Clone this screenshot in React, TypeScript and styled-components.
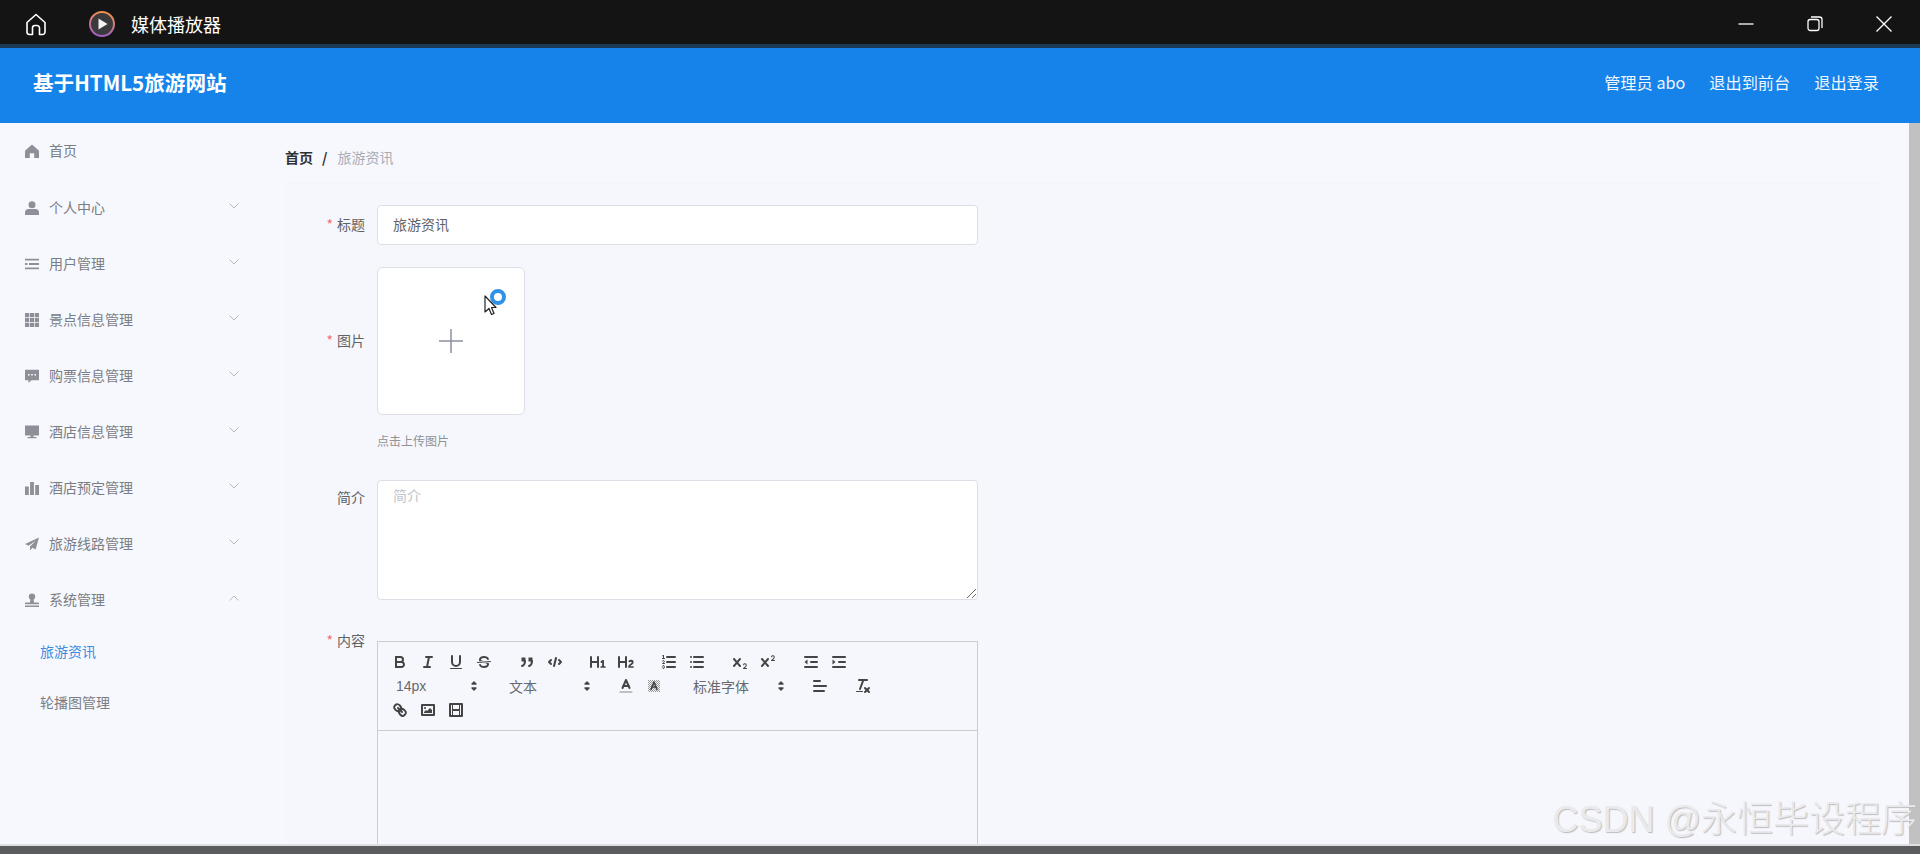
import React from "react";
import styled, { createGlobalStyle } from "styled-components";

const Global = createGlobalStyle`
  html, body { margin: 0; padding: 0; height: 100%; overflow: hidden; }
  body { font-family: "Noto Sans CJK SC", "Liberation Sans", sans-serif; background: #f6f8fd; }
  * { box-sizing: border-box; }
`;

const Page = styled.div`
  position: relative;
  height: 854px;
  display: flex;
  flex-direction: column;
  overflow: hidden;
`;

const TitleBar = styled.div`
  height: 48px;
  flex: none;
  background: #141414;
  border-bottom: 4px solid #1c3a56;
  padding-top: 3px;
  display: flex;
  align-items: center;
  color: #fff;
`;

const HomeButton = styled.div`
  width: 24px;
  height: 24px;
  margin-left: 24px;
  display: flex;
`;

const PlayerLogo = styled.div`
  width: 28px;
  height: 28px;
  margin-left: 40px;
  display: flex;
`;

const PlayerName = styled.div`
  margin-left: 15px;
  font-size: 18px;
  line-height: 24px;
`;

const WindowControls = styled.div`
  margin-left: auto;
  margin-right: 27px;
  display: flex;
  gap: 51px;
`;

const WindowIcon = styled.svg`
  width: 18px;
  height: 18px;
  display: block;
  fill: none;
  stroke: #fff;
  stroke-width: 1.3;
`;

const Header = styled.header`
  height: 75px;
  flex: none;
  background: #1583ea;
  display: flex;
  align-items: center;
  padding: 0 41px 7px 33px;
  color: #fff;
`;

const Brand = styled.div`
  font-size: 20.6px;
  font-weight: 700;
  line-height: 28px;
`;

const HeaderLinks = styled.nav`
  margin-left: auto;
  display: flex;
  gap: 24px;
  font-size: 16.2px;
  line-height: 24px;
  color: #eef6fe;
`;

const Body = styled.div`
  flex: 1;
  min-height: 0;
  display: flex;
  overflow: hidden;
`;

const Sidebar = styled.aside`
  width: 258px;
  flex: none;
  background: #f7f8fd;
`;

const MenuItem = styled.div`
  height: 56px;
  display: flex;
  align-items: center;
  padding: 0 18px 0 25px;
  font-size: 14px;
  color: #7a7d84;
  &:first-child {
    padding-bottom: 2px;
  }
`;

const MenuIcon = styled.svg`
  width: 14px;
  height: 14px;
  flex: none;
  margin: 1px 10px 0 0;
  fill: #8d9098;
  display: block;
`;

const Chevron = styled.svg<{ $up?: boolean }>`
  width: 12px;
  height: 12px;
  margin-left: auto;
  margin-top: -3px;
  fill: none;
  stroke: #b6b8bd;
  stroke-width: 1;
  transform: ${(p) => (p.$up ? "rotate(180deg)" : "none")};
`;

const SubMenu = styled.div`
  margin-top: -2px;
`;

const SubItem = styled.div<{ $active?: boolean }>`
  height: 51px;
  display: flex;
  align-items: center;
  padding-left: 40px;
  font-size: 14px;
  color: ${(p) => (p.$active ? "#3b8ce0" : "#7a7d84")};
`;

const Main = styled.main`
  flex: 1;
  min-width: 0;
  padding: 0 28px 0 27px;
  background: #f7f8fd;
`;

const Crumbs = styled.div`
  height: 60px;
  padding-top: 23px;
  display: flex;
  font-size: 14px;
  line-height: 22px;
  color: #a8abb6;
  border-bottom: 1px solid #f3f4f9;
`;

const CrumbHome = styled.span`
  font-weight: 700;
  color: #303133;
`;

const CrumbSep = styled.span`
  margin: 0 10px 0 9px;
  font-weight: 700;
  color: #303133;
`;

const FormPanel = styled.div`
  background: #f6f7fc;
  padding-top: 22px;
`;

const Field = styled.div<{ $mb?: number }>`
  display: flex;
  margin-bottom: ${(p) => p.$mb ?? 22}px;
`;

const Label = styled.label<{ $top?: number }>`
  width: 80px;
  flex: none;
  margin-right: 12px;
  text-align: right;
  font-size: 14px;
  line-height: 38px;
  color: #606266;
  margin-top: ${(p) => p.$top ?? 0}px;
`;

const Star = styled.span`
  color: #f56c6c;
  margin-right: 4px;
`;

const Control = styled.div`
  width: 601px;
`;

const TextInput = styled.div`
  height: 40px;
  background: #fff;
  border: 1px solid #dcdfe6;
  border-radius: 4px;
  padding: 0 15px;
  font-size: 14px;
  line-height: 37px;
  color: #606266;
`;

const UploadBox = styled.div`
  position: relative;
  width: 148px;
  height: 148px;
  background: #fff;
  border: 1px solid #dcdfe6;
  border-radius: 6px;
  display: flex;
  align-items: center;
  justify-content: center;
`;

const CursorRing = styled.div`
  position: absolute;
  left: 112px;
  top: 21px;
  width: 16px;
  height: 16px;
  border: 4px solid #2f92e8;
  border-radius: 50%;
  background: #fff;
`;

const CursorArrow = styled.svg`
  position: absolute;
  left: 106px;
  top: 27px;
  width: 14px;
  height: 22px;
`;

const Hint = styled.div`
  margin-top: 14px;
  font-size: 12px;
  line-height: 24px;
  color: #8f9298;
`;

const TextArea = styled.div`
  height: 120px;
  background: #fff;
  border: 1px solid #dcdfe6;
  border-radius: 4px;
  padding: 2px 15px;
  font-size: 14px;
  line-height: 24px;
  color: #c0c4cc;
  position: relative;
`;

const ResizeGrip = styled.svg`
  position: absolute;
  right: 0;
  bottom: 0;
  width: 12px;
  height: 12px;
  stroke: #666;
  fill: none;
`;

const Editor = styled.div`
  width: 601px;
  height: 300px;
  border: 1px solid #ccc;
`;

const Toolbar = styled.div`
  padding: 8px;
  border-bottom: 1px solid #ccc;
`;

const ToolRow = styled.div`
  display: flex;
  height: 24px;
  align-items: center;
`;

const ToolGroup = styled.div`
  display: flex;
  margin-right: 15px;
`;

const ToolButton = styled.svg`
  width: 28px;
  height: 24px;
  padding: 3px 5px;
  display: block;
  fill: none;
  stroke: #444;
  stroke-width: 2;
  stroke-linecap: round;
  stroke-linejoin: round;
  .f { fill: #444; stroke: none; }
  .m { stroke-linecap: square; stroke-linejoin: miter; stroke-miterlimit: 2; }
  .t { stroke-width: 1; }
  .dot { fill: #999; stroke: none; }
  .b { stroke-width: 1.6; }
`;

const Picker = styled.div<{ $w: number }>`
  width: ${(p) => p.$w}px;
  height: 24px;
  padding-left: 10px;
  display: flex;
  align-items: center;
  justify-content: space-between;
  font-family: "Liberation Sans", "Noto Sans CJK SC", sans-serif;
  font-size: 14px;
  color: #666a6e;
`;

const PickerArrow = styled.svg`
  width: 18px;
  height: 18px;
  margin-right: 1px;
  fill: #444;
  stroke: #444;
  stroke-width: 1.4;
  stroke-linejoin: round;
`;

const Scrollbar = styled.div`
  width: 11px;
  flex: none;
  background: #c1c1c1;
`;

const Strip = styled.div`
  height: 2px;
  flex: none;
  background: #dfdfe2;
`;

const BottomBar = styled.div`
  height: 8px;
  flex: none;
  background: #5b5c5d;
`;

const Watermark = styled.div`
  position: absolute;
  right: 3px;
  bottom: 10px;
  font-family: "Liberation Sans", "Noto Sans CJK SC", sans-serif;
  font-size: 36px;
  line-height: 48px;
  font-weight: 300;
  color: #eaeaec;
  text-shadow: 1px 1px 1px #bcbcbe;
  white-space: nowrap;
`;

const menu = [
  { label: "首页", icon: <path d="M7 .6 0 6.800V14h4.800V9.200h4.400V14H14V6.800z" /> },
  {
    label: "个人中心",
    more: true,
    icon: (
      <>
        <circle cx="7" cy="3.800" r="3.500" />
        <path d="M0 14v-2.800C0 9.200 2 8 3.500 8h7c1.500 0 3.500 1.200 3.500 3.200V14z" />
      </>
    ),
  },
  {
    label: "用户管理",
    more: true,
    icon: <path d="M0 1.800h14v1.800H0zM4 6.100h10v1.800H4zM0 6.100h2.500v1.800H0zM0 10.400h14v1.800H0z" />,
  },
  {
    label: "景点信息管理",
    more: true,
    icon: (
      <path d="M0 0h4.200v4.200H0zM4.900 0h4.200v4.200H4.900zM9.800 0H14v4.200H9.800zM0 4.900h4.200v4.200H0zM4.900 4.900h4.200v4.200H4.900zM9.800 4.900H14v4.200H9.800zM0 9.800h4.200V14H0zM4.900 9.800h4.200V14H4.900zM9.800 9.800H14V14H9.800z" />
    ),
  },
  {
    label: "购票信息管理",
    more: true,
    icon: (
      <path
        fillRule="evenodd"
        d="M0 .8h14v10.400H6.500L3.500 14v-2.800H0zM3 5v1.600h1.600V5zM6.200 5v1.600h1.600V5zM9.400 5v1.600H11V5z"
      />
    ),
  },
  {
    label: "酒店信息管理",
    more: true,
    icon: <path d="M0 .5h14V10.500H8.500V12H11.500v1.300h-9V12H5.500v-1.500H0z" />,
  },
  {
    label: "酒店预定管理",
    more: true,
    icon: <path d="M0 5.500h3.800V14H0zM5.100 1h3.800v13H5.100zM10.200 4H14v10h-3.800z" />,
  },
  {
    label: "旅游线路管理",
    more: true,
    icon: <path d="M14 .5 0 7l3.600 1.800L11 3.600 5 9.600v4l2.400-2.800 3.200 1.600z" />,
  },
];

const Tool = ({ children }: { children: React.ReactNode }) => (
  <ToolButton viewBox="0 0 18 18">{children}</ToolButton>
);

const Arrows = () => (
  <PickerArrow viewBox="0 0 18 18">
    <polygon points="7 11 9 13 11 11 7 11" />
    <polygon points="7 7 9 5 11 7 7 7" />
  </PickerArrow>
);

export default function App() {
  return (
    <Page>
      <Global />
      <TitleBar>
        <HomeButton>
          <svg viewBox="0 0 24 24" width="24" height="24" fill="none" stroke="#fff" strokeWidth="1.6" strokeLinejoin="round">
            <path d="M3 10.500 12 2.500l9 8V20a2.500 2.500 0 0 1-2.500 2.500H15.500V16a2.500 2.500 0 0 0-2.500-2.500h-2A2.500 2.500 0 0 0 8.500 16v6.500H5.500A2.500 2.500 0 0 1 3 20z" />
          </svg>
        </HomeButton>
        <PlayerLogo>
          <svg viewBox="0 0 28 28" width="28" height="28">
            <defs>
              <linearGradient id="ring" x1="0.7" y1="0" x2="0.5" y2="1">
                <stop offset="0" stopColor="#f0914a" />
                <stop offset="1" stopColor="#a45fc4" />
              </linearGradient>
            </defs>
            <circle cx="14" cy="14" r="12" fill="#3a3a3c" stroke="url(#ring)" strokeWidth="2" />
            <path d="M10.500 8.500v11l9-5.500z" fill="#f2f2f2" />
          </svg>
        </PlayerLogo>
        <PlayerName>媒体播放器</PlayerName>
        <WindowControls>
          <WindowIcon viewBox="0 0 18 18">
            <path d="M1.500 9h15" />
          </WindowIcon>
          <WindowIcon viewBox="0 0 18 18">
            <rect x="2" y="4.500" width="11" height="11" rx="2.200" />
            <path d="M5 2h8.500A2.500 2.500 0 0 1 16 4.500V13" />
          </WindowIcon>
          <WindowIcon viewBox="0 0 18 18">
            <path d="M1.500 1.500l15 15M16.500 1.500l-15 15" />
          </WindowIcon>
        </WindowControls>
      </TitleBar>

      <Header>
        <Brand>基于HTML5旅游网站</Brand>
        <HeaderLinks>
          <span>管理员 abo</span>
          <span>退出到前台</span>
          <span>退出登录</span>
        </HeaderLinks>
      </Header>

      <Body>
        <Sidebar>
          {menu.map((m) => (
            <MenuItem key={m.label}>
              <MenuIcon viewBox="0 0 14 14">{m.icon}</MenuIcon>
              {m.label}
              {m.more && (
                <Chevron viewBox="0 0 12 12">
                  <path d="M1.500 3.500 6 8l4.500-4.500" />
                </Chevron>
              )}
            </MenuItem>
          ))}
          <MenuItem>
            <MenuIcon viewBox="0 0 14 14">
              <circle cx="7" cy="3.600" r="3.200" />
              <path d="M5.500 6h3l.6 3.500H13c.6 0 1 .4 1 1v.8H0v-.8c0-.6.4-1 1-1h3.900zM0 12.400h14V14H0z" />
            </MenuIcon>
            系统管理
            <Chevron viewBox="0 0 12 12" $up>
              <path d="M1.500 3.500 6 8l4.500-4.500" />
            </Chevron>
          </MenuItem>
          <SubMenu>
            <SubItem $active>旅游资讯</SubItem>
            <SubItem>轮播图管理</SubItem>
          </SubMenu>
        </Sidebar>

        <Main>
          <Crumbs>
            <CrumbHome>首页</CrumbHome>
            <CrumbSep>/</CrumbSep>
            <span>旅游资讯</span>
          </Crumbs>
          <FormPanel>
            <Field>
              <Label>
                <Star>*</Star>标题
              </Label>
              <Control>
                <TextInput>旅游资讯</TextInput>
              </Control>
            </Field>
            <Field $mb={27}>
              <Label $top={54}>
                <Star>*</Star>图片
              </Label>
              <Control>
                <UploadBox>
                  <svg viewBox="0 0 24 24" width="24" height="24" stroke="#8c939d" strokeWidth="1.500" fill="none">
                    <path d="M12 0v24M0 12h24" />
                  </svg>
                  <CursorRing />
                  <CursorArrow viewBox="0 0 14 22">
                    <path d="M1 1v16l4-3.500 2.500 6 2.500-1-2.500-6H12z" fill="#fff" stroke="#222" strokeWidth="1.200" strokeLinejoin="round" />
                  </CursorArrow>
                </UploadBox>
                <Hint>点击上传图片</Hint>
              </Control>
            </Field>
            <Field $mb={41}>
              <Label $top={-2}>简介</Label>
              <Control>
                <TextArea>
                  简介
                  <ResizeGrip viewBox="0 0 12 12">
                    <path d="M2 11 11 2M7 11l4-4" />
                  </ResizeGrip>
                </TextArea>
              </Control>
            </Field>
            <Field $mb={0}>
              <Label $top={-20}>
                <Star>*</Star>内容
              </Label>
              <Editor>
                <Toolbar>
                  <ToolRow>
                    <ToolGroup>
                      <Tool>
                        <path className="m" d="M5,4H9.500A2.500,2.500,0,0,1,12,6.500v0A2.500,2.500,0,0,1,9.500,9H5V4Z" />
                        <path className="m" d="M5,9h5.500A2.500,2.500,0,0,1,13,11.500v0A2.500,2.500,0,0,1,10.500,14H5V9Z" />
                      </Tool>
                      <Tool>
                        <line x1="7" x2="13" y1="4" y2="4" />
                        <line x1="5" x2="11" y1="14" y2="14" />
                        <line x1="8" x2="10" y1="14" y2="4" />
                      </Tool>
                      <Tool>
                        <path d="M5,3V9a4.012,4.012,0,0,0,4,4H9a4.012,4.012,0,0,0,4-4V3" />
                        <rect className="f" height="1" rx=".5" ry=".5" width="12" x="3" y="15" />
                      </Tool>
                      <Tool>
                        <line className="t" x1="15.500" x2="2.500" y1="8.500" y2="9.500" />
                        <path className="f" d="M9.007,8C6.542,7.791,6,7.519,6,6.500,6,5.792,7.283,5,9,5c1.571,0,2.765.679,2.969,1.309a1,1,0,0,0,1.900-.617C13.356,4.106,11.354,3,9,3,6.200,3,4,4.538,4,6.500a3.200,3.200,0,0,0,.5,1.843Z" />
                        <path className="f" d="M8.984,10C11.457,10.208,12,10.479,12,11.500c0,.708-1.283,1.500-3,1.500-1.571,0-2.765-.679-2.969-1.309a1,1,0,1,0-1.900.617C4.644,13.894,6.646,15,9,15c2.800,0,5-1.538,5-3.500a3.200,3.200,0,0,0-.5-1.843Z" />
                      </Tool>
                    </ToolGroup>
                    <ToolGroup>
                      <Tool>
                        <rect className="f" height="4" width="4" x="3.500" y="4.500" />
                        <rect className="f" height="4" width="4" x="10.500" y="4.500" />
                        <path d="M7,8c0,4.031-3,5-3,5" />
                        <path d="M14,8c0,4.031-3,5-3,5" />
                      </Tool>
                      <Tool>
                        <polyline points="5 7 3 9 5 11" />
                        <polyline points="13 7 15 9 13 11" />
                        <line x1="10" x2="8" y1="5" y2="13" />
                      </Tool>
                    </ToolGroup>
                    <ToolGroup>
                      <Tool>
                        <path className="f" d="M10,4V14a1,1,0,0,1-2,0V10H3v4a1,1,0,0,1-2,0V4A1,1,0,0,1,3,4V8H8V4a1,1,0,0,1,2,0Zm6.068,9.209H14.990V7.591a.541.541,0,0,0-.605-.605h-.627a1.011,1.011,0,0,0-.748.297L11.645,8.566a.544.544,0,0,0-.022.858l.286.308a.539.539,0,0,0,.847.033l.099-.088a1.214,1.214,0,0,0,.242-.353h.022s-.011.309-.011.605V13.209H12.041a.541.541,0,0,0-.605.605v.439a.541.541,0,0,0,.605.605h4.027a.541.541,0,0,0,.605-.605v-.439A.541.541,0,0,0,16.068,13.209Z" />
                      </Tool>
                      <Tool>
                        <path className="f" d="M16.740,13.814v.439a.541.541,0,0,1-.605.605H11.855a.584.584,0,0,1-.649-.605v-.242c0-2.905,3.399-3.422,3.399-4.555a.777.777,0,0,0-.847-.781,1.177,1.177,0,0,0-.836.385c-.275.264-.561.374-.858.132l-.429-.341c-.308-.242-.385-.518-.154-.814a2.972,2.972,0,0,1,2.454-1.177,2.454,2.454,0,0,1,2.684,2.409c0,2.453-3.179,2.927-3.278,3.938h2.794A.541.541,0,0,1,16.740,13.814ZM9,3A1,1,0,0,0,8,4V8H3V4A1,1,0,0,0,1,4V14a1,1,0,0,0,2,0V10H8v4a1,1,0,0,0,2,0V4A1,1,0,0,0,9,3Z" />
                      </Tool>
                    </ToolGroup>
                    <ToolGroup>
                      <Tool>
                        <line x1="7" x2="15" y1="4" y2="4" />
                        <line x1="7" x2="15" y1="9" y2="9" />
                        <line x1="7" x2="15" y1="14" y2="14" />
                        <line className="t" x1="2.500" x2="4.500" y1="5.500" y2="5.500" />
                        <path className="f" d="M3.500,6A0.500,0.500,0,0,1,3,5.500V3.085l-0.276.138A0.500,0.500,0,0,1,2.053,3c-0.124-.247-0.023-0.324.224-0.447l1-.5A0.500,0.500,0,0,1,4,2.500v3A0.500,0.500,0,0,1,3.500,6Z" />
                        <path className="t" d="M4.500,10.500h-2c0-.234,1.850-1.076,1.850-2.234A0.959,0.959,0,0,0,2.500,8.156" />
                        <path className="t" d="M2.500,14.846a0.959,0.959,0,0,0,1.850-.109A0.700,0.700,0,0,0,3.750,14a0.688,0.688,0,0,0,.6-0.736,0.959,0.959,0,0,0-1.850-.109" />
                      </Tool>
                      <Tool>
                        <line x1="6" x2="15" y1="4" y2="4" />
                        <line x1="6" x2="15" y1="9" y2="9" />
                        <line x1="6" x2="15" y1="14" y2="14" />
                        <line x1="3" x2="3" y1="4" y2="4" />
                        <line x1="3" x2="3" y1="9" y2="9" />
                        <line x1="3" x2="3" y1="14" y2="14" />
                      </Tool>
                    </ToolGroup>
                    <ToolGroup>
                      <Tool>
                        <path className="f" d="M15.500,15H13.861a3.858,3.858,0,0,0,1.914-2.975,1.800,1.800,0,0,0-1.600-1.751A1.921,1.921,0,0,0,12.021,11.700a0.500,0.500,0,1,0,.957.291h0a0.914,0.914,0,0,1,1.053-.725,0.810,0.810,0,0,1,.744.762c0,1.076-1.170,1.870-1.940,2.431A1.456,1.456,0,0,0,12,15.500a0.500,0.500,0,0,0,.5.5h3A0.500,0.500,0,0,0,15.500,15Z" />
                        <path className="f" d="M9.650,5.241a1,1,0,0,0-1.409.108L6,7.964,3.759,5.349a1,1,0,1,0-1.519,1.302L4.684,9.500,2.241,12.350a1,1,0,1,0,1.519,1.300L6,11.036,8.241,13.650a1,1,0,1,0,1.519-1.300L7.316,9.500,9.759,6.651A1,1,0,0,0,9.650,5.241Z" />
                      </Tool>
                      <Tool>
                        <path className="f" d="M15.500,7H13.861a4.015,4.015,0,0,0,1.914-2.975,1.800,1.800,0,0,0-1.600-1.751A1.922,1.922,0,0,0,12.021,3.700a0.500,0.500,0,1,0,.957.291,0.917,0.917,0,0,1,1.053-.725,0.810,0.810,0,0,1,.744.762c0,1.077-1.164,1.925-1.934,2.486A1.423,1.423,0,0,0,12,7.500a0.500,0.500,0,0,0,.5.5h3A0.500,0.500,0,0,0,15.500,7Z" />
                        <path className="f" d="M9.651,5.241a1,1,0,0,0-1.410.108L6,7.964,3.759,5.349a1,1,0,1,0-1.519,1.300L4.683,9.500,2.241,12.350a1,1,0,1,0,1.519,1.300L6,11.036,8.241,13.650a1,1,0,0,0,1.519-1.300L7.317,9.500,9.759,6.651A1,1,0,0,0,9.651,5.241Z" />
                      </Tool>
                    </ToolGroup>
                    <ToolGroup>
                      <Tool>
                        <line x1="3" x2="15" y1="14" y2="14" />
                        <line x1="3" x2="15" y1="4" y2="4" />
                        <line x1="9" x2="15" y1="9" y2="9" />
                        <polygon className="f" points="5.500 6.500 5.500 11.500 2.500 9 5.500 6.500" />
                      </Tool>
                      <Tool>
                        <line x1="3" x2="15" y1="14" y2="14" />
                        <line x1="3" x2="15" y1="4" y2="4" />
                        <line x1="9" x2="15" y1="9" y2="9" />
                        <polygon className="f" points="2.500 6.500 2.500 11.500 5.500 9 2.500 6.500" />
                      </Tool>
                    </ToolGroup>
                  </ToolRow>
                  <ToolRow>
                    <ToolGroup>
                      <Picker $w={98}>
                        14px
                        <Arrows />
                      </Picker>
                    </ToolGroup>
                    <ToolGroup>
                      <Picker $w={98}>
                        文本
                        <Arrows />
                      </Picker>
                    </ToolGroup>
                    <ToolGroup>
                      <Tool>
                        <line className="t" stroke="#888" x1="3" x2="15" y1="15" y2="15" />
                        <polyline points="5.500 11 9 3 12.500 11" />
                        <line x1="11.630" x2="6.380" y1="9" y2="9" />
                      </Tool>
                      <Tool>
                        <pattern id="dots" width="2" height="2" patternUnits="userSpaceOnUse">
                          <rect className="dot" width="1" height="1" />
                          <rect className="dot" x="1" y="1" width="1" height="1" />
                        </pattern>
                        <rect x="3" y="3" width="12" height="12" fill="url(#dots)" stroke="none" />
                        <polyline className="b" points="6 12.500 9 5 12 12.500" />
                        <line className="b" x1="10.800" x2="7.200" y1="10" y2="10" />
                      </Tool>
                    </ToolGroup>
                    <ToolGroup>
                      <Picker $w={108}>
                        标准字体
                        <Arrows />
                      </Picker>
                    </ToolGroup>
                    <ToolGroup>
                      <Tool>
                        <line x1="3" x2="15" y1="9" y2="9" />
                        <line x1="3" x2="13" y1="14" y2="14" />
                        <line x1="3" x2="9" y1="4" y2="4" />
                      </Tool>
                    </ToolGroup>
                    <ToolGroup>
                      <Tool>
                        <line x1="5" x2="13" y1="3" y2="3" />
                        <line x1="6" x2="9.350" y1="12" y2="3" />
                        <line x1="11" x2="15" y1="11" y2="15" />
                        <line x1="15" x2="11" y1="11" y2="15" />
                        <rect className="f" height="1" rx=".5" ry=".5" width="7" x="2" y="14" />
                      </Tool>
                    </ToolGroup>
                  </ToolRow>
                  <ToolRow>
                    <ToolGroup>
                      <Tool>
                        <line x1="7" x2="11" y1="7" y2="11" />
                        <path d="M8.900,4.577a3.476,3.476,0,0,1,.36,4.679A3.476,3.476,0,0,1,4.577,8.900C3.185,7.500,2.035,6.400,4.217,4.217S7.500,3.185,8.900,4.577Z" />
                        <path d="M13.423,9.100a3.476,3.476,0,0,0-4.679-.36,3.476,3.476,0,0,0,.36,4.679c1.392,1.392,2.500,2.542,4.679.36S14.815,10.500,13.423,9.100Z" />
                      </Tool>
                      <Tool>
                        <rect height="10" width="12" x="3" y="4" />
                        <circle className="f" cx="6" cy="7" r="1" />
                        <polygon className="f" points="5 12 5 11 7 9 8 10 11 7 13 9 13 12 5 12" />
                      </Tool>
                      <Tool>
                        <rect height="12" width="12" x="3" y="3" />
                        <rect className="f" height="12" width="1" x="5" y="3" />
                        <rect className="f" height="12" width="1" x="12" y="3" />
                        <rect className="f" height="2" width="8" x="5" y="8" />
                      </Tool>
                    </ToolGroup>
                  </ToolRow>
                </Toolbar>
              </Editor>
            </Field>
          </FormPanel>
        </Main>
        <Scrollbar />
      </Body>
      <Strip />
      <BottomBar />
      <Watermark>CSDN @永恒毕设程序</Watermark>
    </Page>
  );
}
